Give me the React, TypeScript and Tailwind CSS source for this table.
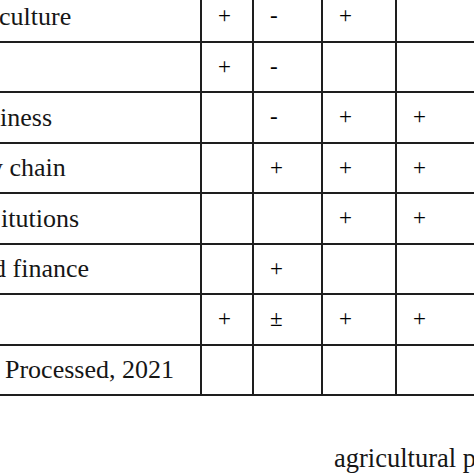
import React from "react";

type Row = { label: string; shift: string; marks: string[] };

const rows: Row[] = [
     { label: "culture", shift: "ml-[-1px]", marks: ["+", "-", "+", ""] },
     { label: "", shift: "", marks: ["+", "-", "", ""] },
     { label: "iness", shift: "ml-0", marks: ["", "-", "+", "+"] },
     { label: "y chain", shift: "ml-[-10px]", marks: ["", "+", "+", "+"] },
     { label: "itutions", shift: "ml-[1px]", marks: ["", "", "+", "+"] },
     { label: "d finance", shift: "ml-[-7px]", marks: ["", "+", "", ""] },
     { label: "", shift: "", marks: ["+", "±", "+", "+"] },
     { label: "Processed, 2021", shift: "ml-[5px]", marks: ["", "", "", ""] },
];

const widths = ["w-[52px]", "w-[69px]", "w-[74px]", "flex-1"];

export default function App() {
     return (
          <div className="w-[474px] h-[474px] overflow-hidden bg-white text-[#161616] font-['Liberation_Serif',serif]">
               {/* table, first column and top row run off the edges */}
               <div className="mt-[-8px] w-[560px]">
                    {rows.map((row, i) => (
                         <div key={i} className="flex h-[50.5px] border-b-2 border-[#1e1e1e]">
                              <div className="w-[200px] overflow-hidden whitespace-nowrap flex items-center text-[26px]">
                                   <span className={row.shift}>{row.label}</span>
                              </div>
                              {row.marks.map((m, j) => (
                                   <div key={j} className={`${widths[j]} border-l-2 border-[#1e1e1e] flex items-center pl-[16px] text-[23px] text-black`}>
                                        {m}
                                   </div>
                              ))}
                         </div>
                    ))}
               </div>

               {/* body text below the table */}
               <div className="mt-[49px] pl-[334px] whitespace-nowrap text-[26.5px] leading-none">
                    agricultural products
               </div>
          </div>
     );
}
